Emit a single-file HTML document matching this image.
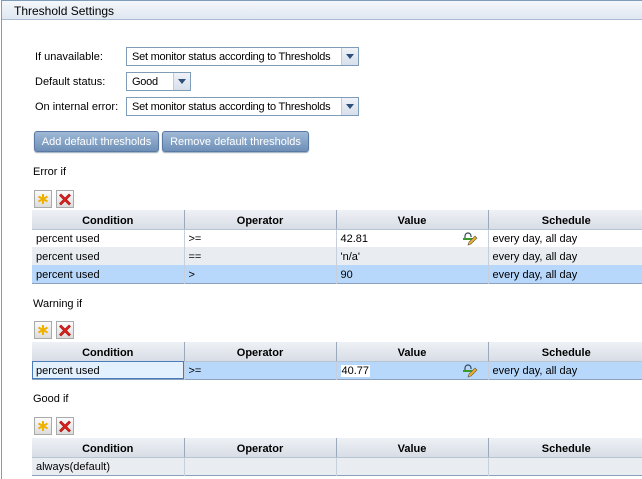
<!DOCTYPE html>
<html><head><style>
*{margin:0;padding:0;box-sizing:border-box}
body{width:642px;height:479px;overflow:hidden;background:#fff;font-family:"Liberation Sans",sans-serif;font-size:11px;color:#000;position:relative}
.frame{position:absolute;left:1px;top:0;width:660px;height:479px;border-left:1px solid #7f9db9;border-top:1px solid #7f9db9}
.hdr{position:absolute;left:2px;top:1px;width:640px;height:19px;background:linear-gradient(#f4f7fb,#dfe7f1);border-bottom:1px solid #a9bcd3;padding:3px 0 0 12px;font-size:12px}
.abs{position:absolute}
.sel{position:absolute;border:1px solid #7f9db9;background:#fff;height:19px;padding:3px 0 0 5px;font-size:11px;letter-spacing:-0.25px;white-space:nowrap;overflow:hidden}
.sel .ar{position:absolute;right:0;top:0;width:17px;height:17px;background:linear-gradient(#f0f3f8,#d6dfeb);border-left:1px solid #c0cbd9}
.sel .ar:after{content:"";position:absolute;left:4px;top:6px;border-left:4px solid transparent;border-right:4px solid transparent;border-top:5px solid #2e4f7a}
.btn{position:absolute;top:131px;height:21px;background:linear-gradient(#9fb9d6,#6e8fb7);border:1px solid #5a7aa3;border-radius:3px;color:#fff;text-align:center;padding-top:4px;font-size:11px;box-shadow:0 1px 1px #9ab;white-space:nowrap}
.ico{position:absolute;width:18px;height:18px;border:1px solid #aaa;background:linear-gradient(#fbfbfb,#dcdcdc)}
table{position:absolute;left:32px;border-collapse:collapse;table-layout:fixed;width:612px}
td,th{height:18px;padding:2px 4px 0;border-left:1px solid #c6cfdb;white-space:nowrap;font-weight:normal;text-align:left}
td:first-child,th:first-child{border-left:none}
th{background:linear-gradient(#eef1f5,#d8dee6);text-align:center;font-weight:bold;height:19px;padding-top:3px;border-bottom:1px solid #b8c4d2;border-left:1px solid #9aa9bb}
tr.a td{background:#fff}tr.b td{background:#e9edf2}tr.s td{background:#b8d8fb}
table.bb{border-bottom:1px solid #8aa0bb}
.lock{position:absolute;right:10px;top:2px;width:16px;height:14px}
</style></head><body>
<div class="frame"></div>
<div class="hdr">Threshold Settings</div>
<div class="abs" style="left:35px;top:51px">If unavailable:</div>
<div class="abs" style="left:35px;top:76px">Default status:</div>
<div class="abs" style="left:35px;top:101px">On internal error:</div>
<div class="sel" style="left:126px;top:47px;width:233px">Set monitor status according to Thresholds<span class="ar"></span></div>
<div class="sel" style="left:126px;top:72px;width:65px">Good<span class="ar"></span></div>
<div class="sel" style="left:126px;top:97px;width:233px">Set monitor status according to Thresholds<span class="ar"></span></div>
<div class="btn" style="left:34px;width:125px">Add default thresholds</div>
<div class="btn" style="left:162px;width:147px">Remove default thresholds</div>

<svg width="0" height="0" style="position:absolute"><defs>
<g id="st"><path d="M8 3v10M3.5 5.5l9 5M3.5 10.5l9-5" stroke="#f0b000" stroke-width="2"/></g>
<g id="xx"><path d="M4 3l4 4 4-4 1.5 1.5-4 4 4 4L12 14l-4-4-4 4-1.5-1.5 4-4-4-4z" fill="#e0201a" stroke="#a01010" stroke-width=".6"/></g>
</defs></svg>

<div class="abs" style="left:33px;top:166px">Error if</div>
<div class="ico" style="left:34px;top:190px"><svg width="16" height="16"><use href="#st"/></svg></div><div class="ico" style="left:56px;top:190px"><svg width="16" height="16"><use href="#xx"/></svg></div>
<table class="bb" style="top:210px">
<tr><th style="width:152px">Condition</th><th style="width:152px">Operator</th><th style="width:152px">Value</th><th>Schedule</th></tr>
<tr class="a"><td>percent used</td><td>&gt;=</td><td style="position:relative">42.81<svg class="lock" viewBox="0 0 16 14"><path d="M3 6V4a3 3 0 0 1 6 0v1" fill="none" stroke="#345" stroke-width="1.2"/><rect x="1" y="6" width="10" height="2" fill="#3a9a2a"/><path d="M6 13l1-3 6-6 2 2-6 6z" fill="#e8b030" stroke="#654" stroke-width=".6"/></svg></td><td>every day, all day</td></tr>
<tr class="b"><td>percent used</td><td>==</td><td>'n/a'</td><td>every day, all day</td></tr>
<tr class="s"><td>percent used</td><td>&gt;</td><td>90</td><td>every day, all day</td></tr>
</table>

<div class="abs" style="left:33px;top:298px">Warning if</div>
<div class="ico" style="left:34px;top:321px"><svg width="16" height="16"><use href="#st"/></svg></div><div class="ico" style="left:56px;top:321px"><svg width="16" height="16"><use href="#xx"/></svg></div>
<table class="bb" style="top:342px">
<tr><th style="width:152px">Condition</th><th style="width:152px">Operator</th><th style="width:152px">Value</th><th>Schedule</th></tr>
<tr class="s"><td style="background:#e3f0fd;outline:1px solid #4a7ab8;outline-offset:-1px">percent used</td><td>&gt;=</td><td style="position:relative"><span style="background:#fff;padding:0 1px">40.77</span><svg class="lock" viewBox="0 0 16 14"><path d="M3 6V4a3 3 0 0 1 6 0v1" fill="none" stroke="#345" stroke-width="1.2"/><rect x="1" y="6" width="10" height="2" fill="#3a9a2a"/><path d="M6 13l1-3 6-6 2 2-6 6z" fill="#e8b030" stroke="#654" stroke-width=".6"/></svg></td><td>every day, all day</td></tr>
</table>

<div class="abs" style="left:33px;top:393px">Good if</div>
<div class="ico" style="left:34px;top:417px"><svg width="16" height="16"><use href="#st"/></svg></div><div class="ico" style="left:56px;top:417px"><svg width="16" height="16"><use href="#xx"/></svg></div>
<table class="bb" style="top:438px">
<tr><th style="width:152px">Condition</th><th style="width:152px">Operator</th><th style="width:152px">Value</th><th>Schedule</th></tr>
<tr class="b"><td>always(default)</td><td></td><td></td><td></td></tr>
</table>
</body></html>
